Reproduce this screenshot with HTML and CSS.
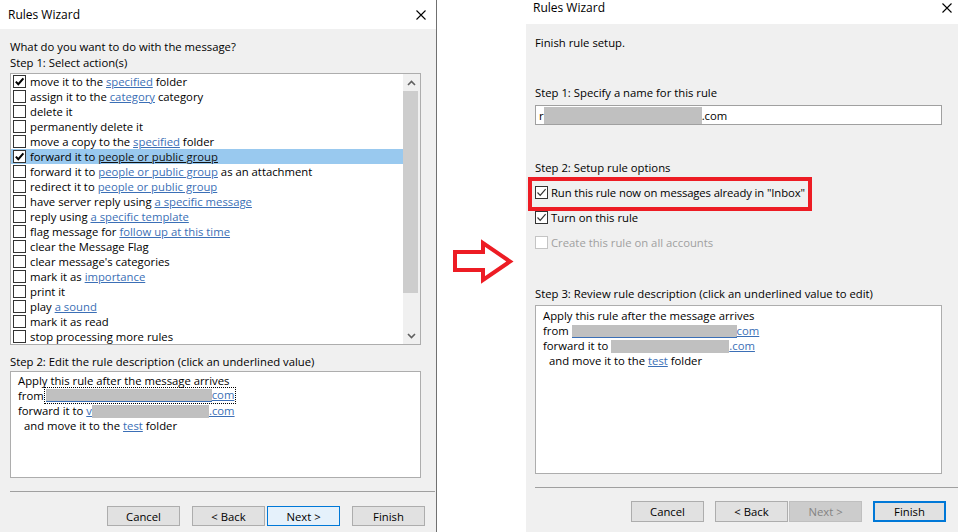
FILE: index.html
```html
<!DOCTYPE html>
<html>
<head>
<meta charset="utf-8">
<link rel="stylesheet" href="styles.css">
</head>
<body>
<div class="win win-left">
  <div class="titlebar tl">
    <span class="title">Rules Wizard</span>
    <svg class="close" width="10" height="10" viewBox="0 0 10 10"><path d="M0.5 0.5L9.5 9.5M9.5 0.5L0.5 9.5" stroke="#000" stroke-width="1.1"/></svg>
  </div>
  <div class="body bl">
    <div class="lbl">What do you want to do with the message?</div>
    <div class="lbl">Step 1: Select action(s)</div>
    <div class="listbox">
      <div class="rows">
        <div class="row"><span class="cb cb-bold on"><svg viewBox="0 0 11 11" width="11" height="11"><path d="M1.8 5.6L4.3 8.2L9.4 2.3" fill="none" stroke="#000" stroke-width="2"/></svg></span><span>move it to the <span class="lnk">specified</span> folder</span></div>
        <div class="row"><span class="cb"></span><span>assign it to the <span class="lnk">category</span> category</span></div>
        <div class="row"><span class="cb"></span><span>delete it</span></div>
        <div class="row"><span class="cb"></span><span>permanently delete it</span></div>
        <div class="row"><span class="cb"></span><span>move a copy to the <span class="lnk">specified</span> folder</span></div>
        <div class="row sel"><span class="cb cb-bold on"><svg viewBox="0 0 11 11" width="11" height="11"><path d="M1.8 5.6L4.3 8.2L9.4 2.3" fill="none" stroke="#000" stroke-width="2"/></svg></span><span>forward it to <span class="lnk lnk-sel">people or public group</span></span></div>
        <div class="row"><span class="cb"></span><span>forward it to <span class="lnk">people or public group</span> as an attachment</span></div>
        <div class="row"><span class="cb"></span><span>redirect it to <span class="lnk">people or public group</span></span></div>
        <div class="row"><span class="cb"></span><span>have server reply using <span class="lnk">a specific message</span></span></div>
        <div class="row"><span class="cb"></span><span>reply using <span class="lnk">a specific template</span></span></div>
        <div class="row"><span class="cb"></span><span>flag message for <span class="lnk">follow up at this time</span></span></div>
        <div class="row"><span class="cb"></span><span>clear the Message Flag</span></div>
        <div class="row"><span class="cb"></span><span>clear message's categories</span></div>
        <div class="row"><span class="cb"></span><span>mark it as <span class="lnk">importance</span></span></div>
        <div class="row"><span class="cb"></span><span>print it</span></div>
        <div class="row"><span class="cb"></span><span>play <span class="lnk">a sound</span></span></div>
        <div class="row"><span class="cb"></span><span>mark it as read</span></div>
        <div class="row"><span class="cb"></span><span>stop processing more rules</span></div>
      </div>
      <div class="scrollbar">
        <div class="sarrow"><svg width="9" height="6" viewBox="0 0 9 6"><path d="M1 5L4.5 1.5L8 5" fill="none" stroke="#606060" stroke-width="1.6"/></svg></div>
        <div class="thumb"></div>
        <div class="track"></div>
        <div class="sarrow"><svg width="9" height="6" viewBox="0 0 9 6"><path d="M1 1L4.5 4.5L8 1" fill="none" stroke="#606060" stroke-width="1.6"/></svg></div>
      </div>
    </div>
    <div class="lbl step2l">Step 2: Edit the rule description (click an underlined value)</div>
    <div class="desc desc-l">
      <div class="dline">Apply this rule after the message arrives</div>
      <div class="dline">from<span class="focus"><span class="redact r-l1"></span><span class="lnk">com</span></span></div>
      <div class="dline">forward it to <span class="lnk">v</span><span class="redact r-l2"></span><span class="lnk">.com</span></div>
      <div class="dline indent">and move it to the <span class="lnk">test</span> folder</div>
    </div>
    <div class="sep sep-l"></div>
    <div class="btns btns-l">
      <div class="btn">Cancel</div>
      <div class="btn g12">&lt; Back</div>
      <div class="btn g2 default">Next &gt;</div>
      <div class="btn g12">Finish</div>
    </div>
  </div>
</div>

<div class="middle">
  <svg width="70" height="52" viewBox="0 0 70 52"><path d="M6 16L34 16L34 7L61 25.5L34 44L34 34L6 34Z" fill="#fff" stroke="#ed1c24" stroke-width="4" stroke-linejoin="miter"/></svg>
</div>

<div class="win win-right">
  <div class="titlebar tr">
    <span class="title">Rules Wizard</span>
    <svg class="close" width="10" height="10" viewBox="0 0 10 10"><path d="M0.5 0.5L9.5 9.5M9.5 0.5L0.5 9.5" stroke="#000" stroke-width="1.1"/></svg>
  </div>
  <div class="body br">
    <div class="lbl fin">Finish rule setup.</div>
    <div class="lbl s1">Step 1: Specify a name for this rule</div>
    <div class="input"><span>r</span><span class="redact r-in"></span><span>.com</span></div>
    <div class="lbl s2">Step 2: Setup rule options</div>
    <div class="hl">
      <div class="opt"><span class="cb cb-thin"><svg viewBox="0 0 11 11" width="11" height="11"><path d="M1.5 5.5L4.2 8.3L9.6 2.2" fill="none" stroke="#333" stroke-width="1.2"/></svg></span><span class="tight">Run this rule now on messages already in "Inbox"</span></div>
    </div>
    <div class="opt"><span class="cb cb-thin"><svg viewBox="0 0 11 11" width="11" height="11"><path d="M1.5 5.5L4.2 8.3L9.6 2.2" fill="none" stroke="#333" stroke-width="1.2"/></svg></span><span>Turn on this rule</span></div>
    <div class="opt disabled"><span class="cb cb-thin"></span><span>Create this rule on all accounts</span></div>
    <div class="lbl s3">Step 3: Review rule description (click an underlined value to edit)</div>
    <div class="desc desc-r">
      <div class="dline">Apply this rule after the message arrives</div>
      <div class="dline">from <span class="redact r-r1"></span><span class="lnk">com</span></div>
      <div class="dline">forward it to <span class="redact r-r2"></span><span class="lnk">.com</span></div>
      <div class="dline indent">and move it to the <span class="lnk">test</span> folder</div>
    </div>
    <div class="sep sep-r"></div>
    <div class="btns btns-r">
      <div class="btn">Cancel</div>
      <div class="btn g11">&lt; Back</div>
      <div class="btn g1 disabled-btn">Next &gt;</div>
      <div class="btn g11 finish">Finish</div>
    </div>
  </div>
</div>
</body>
</html>
```
FILE: styles.css
```css
* { box-sizing: border-box; }
html, body { margin: 0; padding: 0; }
body {
  width: 958px;
  height: 532px;
  overflow: hidden;
  background: #fff;
  display: flex;
  font-family: "Segoe UI", "Open Sans", sans-serif;
  font-size: 11.3px;
  color: #000;
}
.win { display: flex; flex-direction: column; height: 532px; }
.win-left { width: 437px; border-right: 1px solid #707070; flex: none; }
.win-right { width: 432px; flex: none; }
.titlebar { background: #fff; display: flex; justify-content: space-between; }
.tl { height: 29px; align-items: center; padding: 0 10px 0 8px; }
.tr { height: 24px; align-items: flex-start; padding: 0 6px 0 7px; }
.tr .title { line-height: 16px; }
.tr .close { margin-top: 3px; }
.title { font-size: 12px; }
.body { flex: 1; background: #f0f0f0; }
.bl { padding: 10px 0 0 10px; }
.br { padding: 0 0 0 9px; }
.lbl { line-height: 16px; white-space: nowrap; }

.listbox {
  margin-top: 2px;
  width: 411px;
  height: 272px;
  border: 1px solid #adadad;
  background: #fff;
  display: flex;
}
.rows { flex: 1; }
.row {
  height: 15px;
  display: flex;
  align-items: center;
  padding-left: 2px;
  white-space: nowrap;
  line-height: 15px;
}
.row.sel { background: #99c9ef; }
.cb {
  width: 13px;
  height: 13px;
  border: 1px solid #333;
  background: #fff;
  flex: none;
  margin-right: 4px;
  display: flex;
  align-items: center;
  justify-content: center;
}
.lnk { color: #3b6fb6; text-decoration: underline; }
.lnk-sel { color: #111; }
.scrollbar {
  width: 17px;
  background: #f0f0f0;
  display: flex;
  flex-direction: column;
  flex: none;
}
.sarrow { height: 17px; display: flex; align-items: center; justify-content: center; }
.thumb { height: 202px; background: #cdcdcd; margin: 0 2px 0 0; }
.track { flex: 1; }

.step2l { margin-top: 9px; }
.desc { background: #fff; border: 1px solid #adadad; }
.desc-l { margin-top: 1px; width: 411px; height: 107px; padding: 1px 0 0 7px; }
.dline { line-height: 15px; height: 15px; white-space: nowrap; }
.indent { padding-left: 6px; }
.redact {
  display: inline-block;
  background: #c0c0c0;
  height: 13px;
  vertical-align: -3px;
}
.focus {
  display: inline-block;
  outline: 1px dotted #000;
  line-height: 14px;
  height: 15px;
  margin-left: 1px;
  padding: 0 1px;
  vertical-align: top;
}
.focus .redact { vertical-align: -3px; }
.r-l1 { width: 166px; border-bottom: 1px solid #3b6fb6; }
.r-l2 { width: 117px; }
.sep { height: 0; border-top: 1px solid #a0a0a0; }
.sep-l { margin-top: 13px; width: 425px; }
.btns { display: flex; }
.btns-l { margin-top: 14px; margin-left: 97px; }
.btn {
  width: 73px;
  height: 20px;
  background: #e1e1e1;
  border: 1px solid #adadad;
  display: flex;
  align-items: center;
  justify-content: center;
  flex: none;
}
.g12 { margin-left: 12px; }
.g2 { margin-left: 2px; }
.g11 { margin-left: 11px; }
.g1 { margin-left: 1px; }
.default { border-color: #0078d7; background: #e5f1fb; }

.middle { width: 89px; flex: none; padding: 236px 0 0 12px; }

.fin { margin-top: 11px; }
.s1 { margin-top: 34px; }
.input {
  margin-top: 4px;
  width: 407px;
  height: 20px;
  background: #fff;
  border: 1px solid #a0a0a0;
  display: flex;
  align-items: center;
  padding-left: 3px;
  white-space: nowrap;
}
.r-in { width: 158px; height: 17px; vertical-align: 0; }
.s2 { margin-top: 35px; }
.hl {
  margin-top: 1px;
  margin-left: -7px;
  width: 284px;
  height: 34px;
  border: 4px solid #ed1c24;
  padding: 4px 0 0 3px;
}
.tight { letter-spacing: -0.12px; }
.opt { height: 15px; display: flex; align-items: center; white-space: nowrap; }
.opt .cb { margin-right: 3px; }
.cb-thin { border-color: #333; }
.hl + .opt { margin-top: -1px; }
.opt + .opt.disabled { margin-top: 10px; }
.disabled { color: #a0a0a0; }
.disabled .cb { border-color: #c4c4c4; }
.s3 { margin-top: 36px; }
.desc-r { margin-top: 3px; width: 407px; height: 169px; padding: 2px 0 0 7px; }
.r-r1 { width: 165px; border-bottom: 1px solid #3b6fb6; }
.r-r2 { width: 118px; }
.sep-r { margin-top: 13px; width: 423px; }
.btns-r { margin-top: 13px; margin-left: 96px; }
.btns-r .btn { height: 21px; }
.disabled-btn { background: #cccccc; border-color: #bfbfbf; color: #838383; }
.finish { border: 2px solid #0078d7; }
```
